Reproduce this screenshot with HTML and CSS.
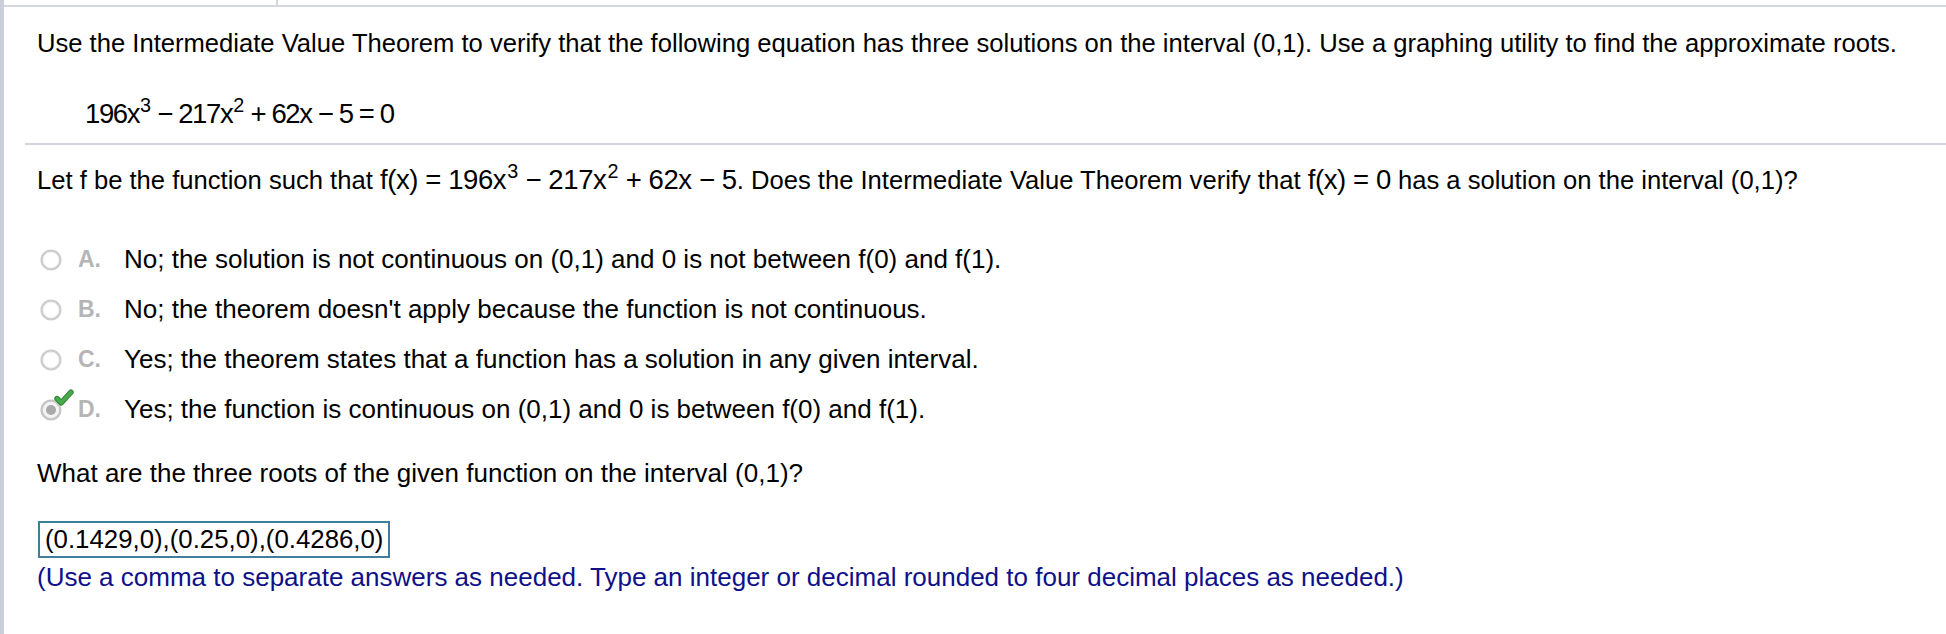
FILE: index.html
```html
<!DOCTYPE html>
<html lang="en">
<head>
<meta charset="utf-8">
<title>Intermediate Value Theorem</title>
<link rel="stylesheet" href="styles.css">
</head>
<body>
<div class="frame">
  <div class="topbar"><div class="topcell"></div></div>
  <section class="stem">
    <p class="line l1">Use the Intermediate Value Theorem to verify that the following equation has three solutions on the interval (0,1). Use a graphing utility to find the approximate roots.</p>
    <p class="eq-line"><span class="math eq">196x<sup>3</sup> − 217x<sup>2</sup> + 62x − 5 = 0</span></p>
  </section>
  <hr class="sep">
  <section class="part">
    <p class="line l2">Let f be the function such that <span class="math">f(x) = 196x<sup>3</sup> − 217x<sup>2</sup> + 62x − 5</span>. Does the Intermediate Value Theorem verify that <span class="math">f(x) = 0</span> has a solution on the interval (0,1)?</p>
    <ul class="choices">
      <li class="choice">
        <span class="radio"><svg width="22" height="22" viewBox="0 0 22 22"><circle cx="11" cy="11" r="9.4" fill="#fff" stroke="#cdcdcd" stroke-width="2.4"/><circle cx="11" cy="11" r="7.8" fill="none" stroke="#efefef" stroke-width="1"/></svg></span>
        <span class="letter">A.</span>
        <span class="ctext">No; the solution is not continuous on (0,1) and 0 is not between f(0) and f(1).</span>
      </li>
      <li class="choice">
        <span class="radio"><svg width="22" height="22" viewBox="0 0 22 22"><circle cx="11" cy="11" r="9.4" fill="#fff" stroke="#cdcdcd" stroke-width="2.4"/><circle cx="11" cy="11" r="7.8" fill="none" stroke="#efefef" stroke-width="1"/></svg></span>
        <span class="letter">B.</span>
        <span class="ctext">No; the theorem doesn't apply because the function is not continuous.</span>
      </li>
      <li class="choice">
        <span class="radio"><svg width="22" height="22" viewBox="0 0 22 22"><circle cx="11" cy="11" r="9.4" fill="#fff" stroke="#cdcdcd" stroke-width="2.4"/><circle cx="11" cy="11" r="7.8" fill="none" stroke="#efefef" stroke-width="1"/></svg></span>
        <span class="letter">C.</span>
        <span class="ctext">Yes; the theorem states that a function has a solution in any given interval.</span>
      </li>
      <li class="choice">
        <span class="radio"><svg width="22" height="22" viewBox="0 0 22 22"><circle cx="11" cy="11" r="9.4" fill="#f3f3f3" stroke="#c6c6c6" stroke-width="2.4"/><circle cx="11" cy="11" r="5" fill="#a9a9a9"/></svg>
          <svg class="check" width="20" height="18" viewBox="0 0 20 18"><path d="M3 9.5 L7.2 13.8 L17 3.2" fill="none" stroke="#2f7f32" stroke-width="5.4" stroke-linecap="round" stroke-linejoin="round"/><path d="M3 9.5 L7.2 13.8 L17 3.2" fill="none" stroke="#46aa48" stroke-width="3.6" stroke-linecap="round" stroke-linejoin="round"/></svg>
        </span>
        <span class="letter">D.</span>
        <span class="ctext">Yes; the function is continuous on (0,1) and 0 is between f(0) and f(1).</span>
      </li>
    </ul>
    <p class="line l3">What are the three roots of the given function on the interval (0,1)?</p>
    <div class="answer">(0.1429,0),(0.25,0),(0.4286,0)</div>
    <p class="hint">(Use a comma to separate answers as needed. Type an integer or decimal rounded to four decimal places as needed.)</p>
  </section>
</div>
</body>
</html>
```
FILE: styles.css
```css
html, body {
  margin: 0;
  padding: 0;
  background: #ffffff;
}

body {
  font-family: "Liberation Sans", Arial, sans-serif;
  font-size: 25.6px;
  color: #000;
}

.frame {
  border-left: 4px solid #c9ced8;
  min-height: 634px;
  box-sizing: border-box;
}

.topbar {
  height: 5px;
  border-bottom: 2px solid #d3d7de;
}

.topcell {
  width: 272px;
  height: 5px;
  border-right: 2px solid #d3d7de;
}

.stem {
  padding-left: 33px;
}

.line {
  margin: 0;
  line-height: 30px;
  white-space: nowrap;
}

.l1 {
  margin-top: 21px;
}

.eq-line {
  margin: 41px 0 0 48px;
  line-height: 30px;
}

.math {
  font-size: 27.5px;
  letter-spacing: -0.4px;
  line-height: 20px;
}

.math.eq {
  letter-spacing: -1.4px;
}

.math sup {
  font-size: 0.72em;
  line-height: 0;
  vertical-align: 0.58em;
  letter-spacing: 0;
  margin-left: 1px;
}

.sep {
  margin: 14px 0 0 21px;
  border: 0;
  height: 2px;
  background: #d1d4da;
}

.part {
  padding-left: 33px;
}

.l2 {
  margin-top: 20px;
}

.choices {
  list-style: none;
  margin: 39px 0 0 0;
  padding: 0;
}

.choice {
  display: flex;
  align-items: center;
  height: 50px;
  white-space: nowrap;
  font-size: 26px;
}

.radio {
  position: relative;
  width: 22px;
  height: 22px;
  margin-left: 3px;
  margin-top: 2px;
  flex: none;
}

.radio svg {
  display: block;
}

.check {
  position: absolute;
  left: 14px;
  top: -10px;
}

.letter {
  margin-left: 16px;
  width: 46px;
  flex: none;
  font-size: 23px;
  font-weight: bold;
  color: #b5b5b5;
}

.l3 {
  margin-top: 24px;
  font-size: 26px;
}

.answer {
  display: inline-block;
  margin: 33px 0 0 1px;
  height: 33px;
  line-height: 33px;
  padding: 0 5px 0 5px;
  border: 2px solid #3f7f9d;
  font-size: 25.8px;
}

.hint {
  margin: 4px 0 0 0;
  line-height: 30px;
  font-size: 26px;
  color: #10108a;
  white-space: nowrap;
}
```
